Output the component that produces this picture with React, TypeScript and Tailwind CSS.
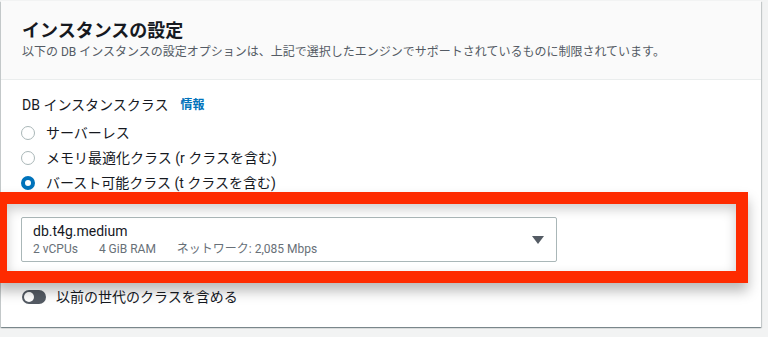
import React from 'react';

const font = { fontFamily: 'Roboto, "Noto Sans CJK JP", sans-serif' };

function Radio({ label, checked }: { label: string; checked?: boolean }) {
  return (
    <label className="flex items-center h-[25px] gap-[11px] pl-[20px]">
      {checked ? (
        <span className="w-[14px] h-[14px] rounded-full border-[4px] border-[#0073bb] bg-white" />
      ) : (
        <span className="w-[14px] h-[14px] rounded-full border-[1.5px] border-[#aab7b8] bg-white" />
      )}
      <span className="text-[14px] leading-[20px] text-[#16191f]">{label}</span>
    </label>
  );
}

export default function App() {
  return (
    <div className="relative w-[768px] h-[337px] bg-[#f2f3f3] overflow-hidden" style={font}>
      <div className="ml-[1px] mt-[1px] w-[760px] h-[326px] bg-white shadow-[0_1px_1px_0_rgba(0,28,36,0.3),1px_1px_1px_0_rgba(0,28,36,0.15),-1px_1px_1px_0_rgba(0,28,36,0.15)]">
        <div className="bg-[#fafafa] border-b border-[#eaeded] px-[21px] pt-[19px] pb-[19px]">
          <h2 className="text-[18px] leading-[22px] font-bold text-[#16191f]">インスタンスの設定</h2>
          <p className="mt-[2px] text-[12px] leading-[16px] text-[#545b64]">
            以下の DB インスタンスの設定オプションは、上記で選択したエンジンでサポートされているものに制限されています。
          </p>
        </div>

        <div className="pt-[15px]">
          <div className="flex items-center gap-[12px] px-[21px] h-[20px]">
            <span className="text-[14px] leading-[20px] text-[#16191f]">DB インスタンスクラス</span>
            <a className="text-[12px] font-bold text-[#0073bb]">情報</a>
          </div>

          <div className="mt-[5px] flex flex-col">
            <Radio label="サーバーレス" />
            <Radio label="メモリ最適化クラス (r クラスを含む)" />
            <Radio label="バースト可能クラス (t クラスを含む)" checked />
          </div>

          <div className="mt-[22px] ml-[20px] w-[536px] h-[45px] border border-[#aab7b8] rounded-[2px] flex items-center pl-[11px] pr-[12px]">
            <div className="flex-1">
              <div className="text-[14px] leading-[19px] text-[#16191f]">db.t4g.medium</div>
              <div className="flex gap-[21px] text-[12px] leading-[16px] text-[#687078]">
                <span>2 vCPUs</span>
                <span>4 GiB RAM</span>
                <span>ネットワーク: 2,085 Mbps</span>
              </div>
            </div>
            <svg width="12" height="8" viewBox="0 0 12 8" className="mt-[1px]">
              <path d="M0 0h12L6 8z" fill="#545b64" />
            </svg>
          </div>

          <div className="mt-[25px] flex items-center gap-[10px] pl-[21px] h-[20px]">
            <span className="relative w-[24px] h-[14px] rounded-full bg-[#545b64]">
              <span className="absolute left-[2px] top-[2px] w-[10px] h-[10px] rounded-full bg-white" />
            </span>
            <span className="text-[14px] leading-[20px] text-[#16191f]">以前の世代のクラスを含める</span>
          </div>
        </div>
      </div>

      <div className="absolute left-[-5px] top-[192px] w-[753px] h-[91px] border-[12px] border-[#fe2b00] shadow-[0_8px_12px_rgba(0,0,0,0.28),inset_0_5px_12px_rgba(0,0,0,0.2)]" />
    </div>
  );
}
